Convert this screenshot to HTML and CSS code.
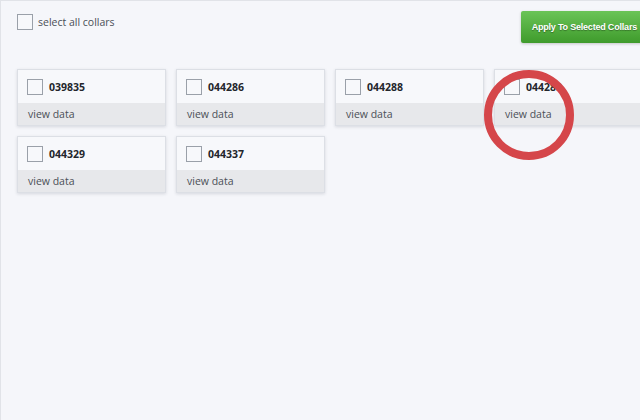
FILE: index.html
```html
<!DOCTYPE html>
<html>
<head>
<meta charset="utf-8">
<link rel="stylesheet" href="styles.css">
</head>
<body>
<div class="page">
  <div class="topbar">
    <label class="select-all"><span class="box"></span><span class="label">select all collars</span></label>
    <button class="apply">Apply To Selected Collars</button>
  </div>
  <div class="grid">
    <div class="card"><div class="head"><span class="box"></span><span class="num">039835</span></div><div class="foot">view data</div></div>
    <div class="card"><div class="head"><span class="box"></span><span class="num">044286</span></div><div class="foot">view data</div></div>
    <div class="card"><div class="head"><span class="box"></span><span class="num">044288</span></div><div class="foot">view data</div></div>
    <div class="card"><div class="head"><span class="box"></span><span class="num">044289</span></div><div class="foot">view data</div></div>
    <div class="card"><div class="head"><span class="box"></span><span class="num">044329</span></div><div class="foot">view data</div></div>
    <div class="card"><div class="head"><span class="box"></span><span class="num">044337</span></div><div class="foot">view data</div></div>
  </div>
  <div class="ring"></div>
</div>
</body>
</html>
```
FILE: styles.css
```css
html, body {
  margin: 0;
  padding: 0;
  overflow: hidden;
  background: #f5f6fa;
}
body {
  font-family: "Open Sans", "Liberation Sans", sans-serif;
  width: 640px;
  height: 420px;
}
.page {
  position: relative;
  box-sizing: border-box;
  height: 420px;
  width: 660px;
  border-top: 1px solid #e1e3e8;
  border-left: 1px solid #e1e3e8;
  padding: 13px 0 0 16px;
}
.topbar {
  display: flex;
  align-items: flex-start;
  justify-content: space-between;
  height: 55px;
}
.select-all {
  display: flex;
  align-items: center;
  gap: 5px;
  color: #4a4f57;
  font-size: 10.5px;
}
.box {
  display: inline-block;
  box-sizing: border-box;
  width: 16px;
  height: 16px;
  border: 1px solid #9aa0a9;
  background: #f7f8fb;
  flex: none;
}
.apply {
  margin-top: -3px;
  margin-right: 12px;
  height: 32px;
  padding: 0 11px;
  border: none;
  border-radius: 2px;
  background: linear-gradient(#6ac457, #3f9b2c);
  color: #fff;
  font-family: "Liberation Sans", Arial, sans-serif;
  font-weight: bold;
  font-size: 9px;
  letter-spacing: -0.2px;
  text-shadow: 0 1px 1px rgba(0,0,0,0.35);
  box-shadow: 0 1px 3px rgba(0,0,0,0.2);
  white-space: nowrap;
}
.grid {
  display: grid;
  grid-template-columns: repeat(4, 149px);
  column-gap: 10px;
  row-gap: 10px;
}
.card {
  box-sizing: border-box;
  height: 57px;
  border: 1px solid #dcdfe5;
  background: #f7f8fb;
  box-shadow: 0 1px 3px rgba(40,50,70,0.15);
  display: flex;
  flex-direction: column;
}
.head {
  height: 33px;
  display: flex;
  align-items: center;
  gap: 6px;
  padding-left: 9px;
}
.num {
  font-weight: bold;
  font-size: 10.5px;
  color: #23262b;
}
.foot {
  flex: 1;
  background: #e7e8eb;
  display: flex;
  align-items: center;
  padding-left: 10px;
  padding-bottom: 1px;
  font-size: 10.5px;
  color: #4a4f57;
}
.ring {
  position: absolute;
  left: 483px;
  top: 69px;
  width: 90px;
  height: 90px;
  box-sizing: border-box;
  border: 8px solid #d5464a;
  border-radius: 50%;
}
```
